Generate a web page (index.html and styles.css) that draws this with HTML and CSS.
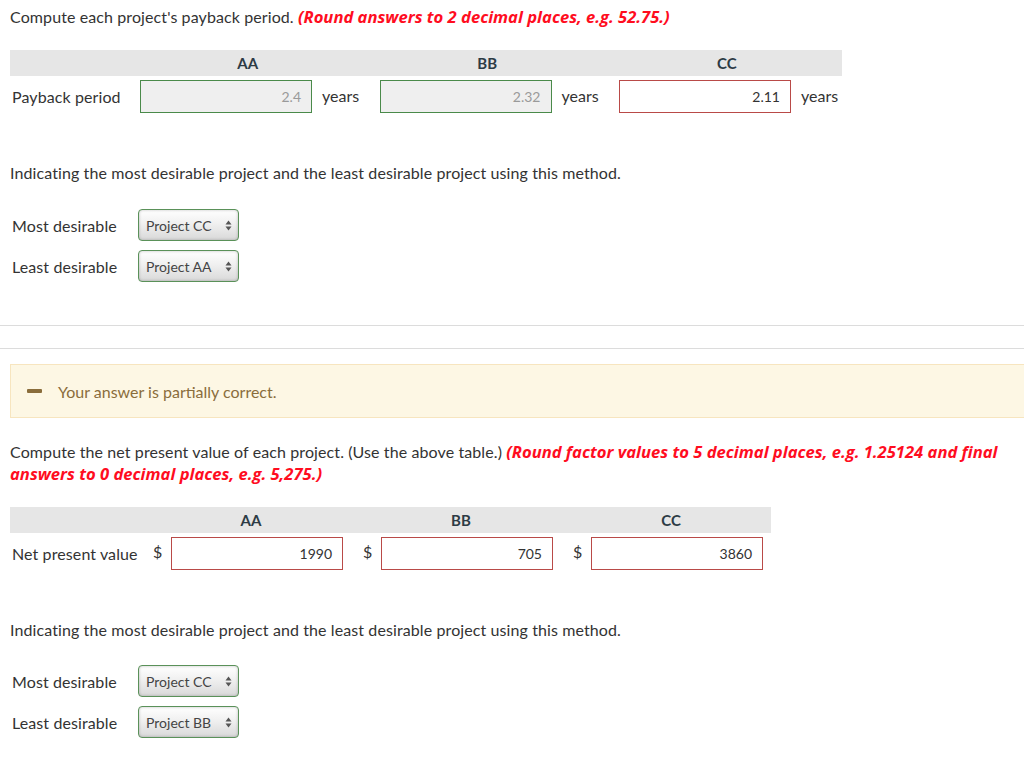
FILE: index.html
```html
<!DOCTYPE html>
<html>
<head>
<meta charset="utf-8">
<link rel="stylesheet" href="styles.css">
</head>
<body>
<div class="page">
  <p class="q q1">Compute each project's payback period. <span class="hint">(Round answers to 2 decimal places, e.g. 52.75.)</span></p>

  <div class="tbl tbl1">
    <div class="thead">
      <div class="th"></div>
      <div class="th">AA</div>
      <div class="th">BB</div>
      <div class="th">CC</div>
    </div>
    <div class="trow">
      <div class="rlabel">Payback period</div>
      <div class="cell pb"><span class="inp ok">2.4</span><span class="unit">years</span></div>
      <div class="cell pb"><span class="inp ok">2.32</span><span class="unit">years</span></div>
      <div class="cell pb"><span class="inp bad">2.11</span><span class="unit">years</span></div>
    </div>
  </div>

  <p class="q q2">Indicating the most desirable project and the least desirable project using this method.</p>

  <div class="sels">
    <div class="selrow"><span class="slabel">Most desirable</span><span class="sel">Project CC<span class="arr"><svg width="7" height="11" viewBox="0 0 7 11"><path d="M3.5 0.5 L6.5 4.5 L0.5 4.5 Z M3.5 10.5 L6.5 6.5 L0.5 6.5 Z" fill="#555"/></svg></span></span></div>
    <div class="selrow"><span class="slabel">Least desirable</span><span class="sel">Project AA<span class="arr"><svg width="7" height="11" viewBox="0 0 7 11"><path d="M3.5 0.5 L6.5 4.5 L0.5 4.5 Z M3.5 10.5 L6.5 6.5 L0.5 6.5 Z" fill="#555"/></svg></span></span></div>
  </div>

  <div class="rule r1"></div>
  <div class="rule r2"></div>

  <div class="feedback"><span class="dash"></span><span class="ftext">Your answer is partially correct.</span></div>

  <p class="q q3">Compute the net present value of each project. (Use the above table.) <span class="hint">(Round factor values to 5 decimal places, e.g. 1.25124 and final answers to 0 decimal places, e.g. 5,275.)</span></p>

  <div class="tbl tbl2">
    <div class="thead">
      <div class="th"></div>
      <div class="th">AA</div>
      <div class="th">BB</div>
      <div class="th">CC</div>
    </div>
    <div class="trow">
      <div class="rlabel">Net present value</div>
      <div class="cell npv"><span class="cur">$</span><span class="inp bad">1990</span></div>
      <div class="cell npv"><span class="cur">$</span><span class="inp bad">705</span></div>
      <div class="cell npv"><span class="cur">$</span><span class="inp bad">3860</span></div>
    </div>
  </div>

  <p class="q q4">Indicating the most desirable project and the least desirable project using this method.</p>

  <div class="sels sels2">
    <div class="selrow"><span class="slabel">Most desirable</span><span class="sel">Project CC<span class="arr"><svg width="7" height="11" viewBox="0 0 7 11"><path d="M3.5 0.5 L6.5 4.5 L0.5 4.5 Z M3.5 10.5 L6.5 6.5 L0.5 6.5 Z" fill="#555"/></svg></span></span></div>
    <div class="selrow"><span class="slabel">Least desirable</span><span class="sel">Project BB<span class="arr"><svg width="7" height="11" viewBox="0 0 7 11"><path d="M3.5 0.5 L6.5 4.5 L0.5 4.5 Z M3.5 10.5 L6.5 6.5 L0.5 6.5 Z" fill="#555"/></svg></span></span></div>
  </div>
</div>
</body>
</html>
```

FILE: styles.css
```css
html, body {
  margin: 0;
  padding: 0;
  background: #fff;
  overflow: hidden;
}
body {
  font-family: Lato, "Open Sans", "Liberation Sans", sans-serif;
  color: #333333;
  font-size: 16px;
}
.page {
  padding: 6px 0 0 10px;
  width: 1100px;
}
.q {
  margin: 0;
  line-height: 22px;
  font-size: 16px;
  color: #333;
  letter-spacing: 0.1px;
}
.hint {
  color: #ff0d1f;
  font-family: "Open Sans", Lato, sans-serif;
  font-weight: bold;
  font-style: italic;
  font-size: 16.6px;
  letter-spacing: 0;
}
.q3 {
  margin-top: 23px;
  width: 1000px;
}
.tbl1 { margin-top: 22px; }
.tbl2 { margin-top: 22px; }
.thead {
  display: grid;
  background: #e6e6e6;
  height: 26px;
  align-items: center;
}
.tbl1 .thead, .tbl1 .trow {
  grid-template-columns: 118px 239.5px 239.5px 239.5px;
  width: 832px;
}
.tbl2 .thead, .tbl2 .trow {
  grid-template-columns: 136px 210px 210px 210px;
  width: 761px;
}
.th {
  text-align: center;
  font-weight: bold;
  font-size: 15px;
  color: #2d3b45;
  line-height: 26px;
}
.trow {
  display: grid;
  margin-top: 4px;
  align-items: center;
  height: 33px;
}
.rlabel {
  padding-left: 2px;
  font-size: 16px;
  line-height: 33px;
  letter-spacing: 0.1px;
}
.cell {
  display: flex;
  align-items: center;
}
.pb { padding-left: 12px; }
.npv { padding-left: 7px; }
.inp {
  box-sizing: border-box;
  display: block;
  width: 172px;
  height: 33px;
  line-height: 31px;
  text-align: right;
  padding-right: 10px;
  font-size: 14px;
  border: 1px solid;
}
.inp.ok {
  border-color: #4a8a4a;
  background: #efefef;
  color: #9a9a9a;
}
.inp.bad {
  border-color: #b94a48;
  background: #fff;
  color: #333;
}
.unit {
  margin-left: 10px;
  font-size: 16px;
  margin-top: -3px;
}
.cur {
  width: 18px;
  font-size: 16px;
  margin-top: -4px;
}
.q2 { margin-top: 49px; }
.q4 { margin-top: 49px; }
.sels { margin-top: 25px; }
.sels2 { margin-top: 24px; }
.selrow {
  display: flex;
  align-items: center;
  height: 32px;
  margin-bottom: 9px;
}
.slabel {
  width: 126px;
  padding-left: 2px;
  font-size: 16px;
  letter-spacing: 0.1px;
}
.sel {
  box-sizing: border-box;
  width: 101px;
  height: 32px;
  border: 1px solid #5a9159;
  border-radius: 4px;
  background: linear-gradient(#ffffff, #f0f0f0 45%, #d9d9d9);
  box-shadow: inset 0 0 3px rgba(0,0,0,0.25);
  display: flex;
  align-items: center;
  padding-left: 7px;
  font-size: 14px;
  color: #444;
  position: relative;
}
.arr {
  position: absolute;
  right: 6px;
  top: 10px;
  display: block;
  line-height: 0;
}
.rule {
  height: 1px;
  background: #dcdcdc;
  width: 1100px;
  margin-left: -10px;
}
.r1 { margin-top: 43px; }
.r2 { margin-top: 22px; }
.feedback {
  margin-top: 15px;
  box-sizing: border-box;
  height: 54px;
  border: 1px solid #f7e5bf;
  background: #fdf7e4;
  display: flex;
  align-items: center;
  width: 1100px;
}
.dash {
  display: block;
  width: 15px;
  height: 4px;
  background: #8a6d3b;
  margin-left: 16px;
  border-radius: 1px;
}
.ftext {
  margin-left: 16px;
  color: #8a6d3b;
  font-size: 16px;
}
```
